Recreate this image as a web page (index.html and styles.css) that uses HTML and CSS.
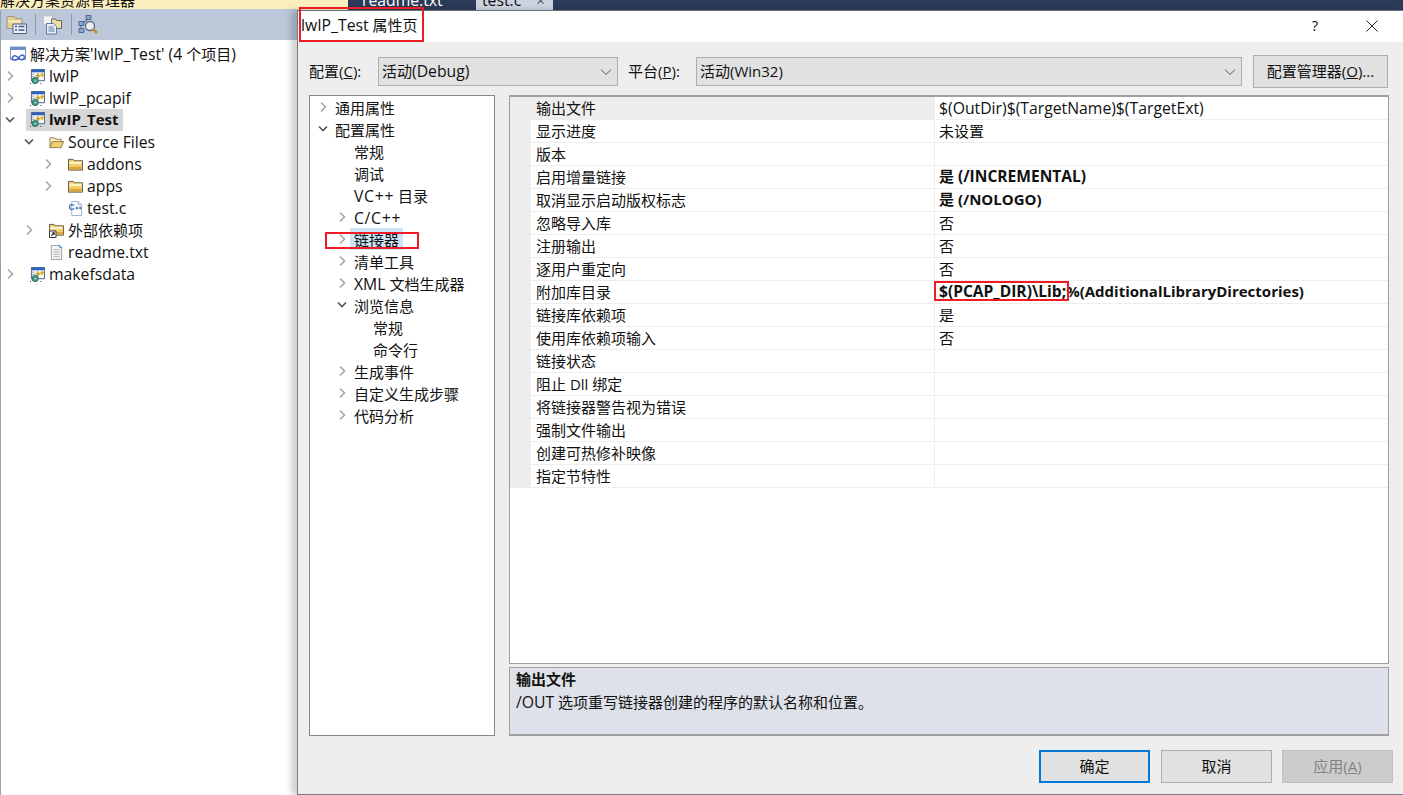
FILE: index.html
```html
<!DOCTYPE html>
<html lang="zh-CN">
<head>
<meta charset="utf-8">
<title>lwIP_Test 属性页</title>
<link rel="stylesheet" href="styles.css">
</head>
<body>
<svg class="defs" width="0" height="0" aria-hidden="true">
  <defs>
    <symbol id="chev-r" viewBox="0 0 10 12"><path d="M3 1.500 7.500 6 3 10.500" fill="none" stroke="#a6a6a6" stroke-width="1.600"/></symbol>
    <symbol id="chev-d" viewBox="0 0 10 12"><path d="M1 3.500 5 7.500 9 3.500" fill="none" stroke="#555" stroke-width="1.600"/></symbol>
    <symbol id="folder" viewBox="0 0 16 14"><path d="M.5 1.500h5l1 1.500h9v10H.5z" fill="#f3cf6b" stroke="#5f5a48"/><path d="M1.500 4h13v2.500h-13z" fill="#fdf2c4"/><path d="M1.500 9.500h13V12h-13z" fill="#dca43a"/></symbol>
    <symbol id="folder-link" viewBox="0 0 16 16"><path d="M.5 1.500h5l1 1.500h9v10H.5z" fill="#f3cf6b" stroke="#5f5a48"/><path d="M1.500 4h13v2.500h-13z" fill="#fdf2c4"/><path d="M1.500 9.500h13V12h-13z" fill="#dca43a"/><path d="M0 8h8v8H0z" fill="#fff"/><path d="M.5 8.500h7v7h-7z" fill="#fff" stroke="#222"/><path d="M2.500 13.500 5.500 10.500M3.500 10.500h2v2" fill="none" stroke="#111" stroke-width="1.100"/></symbol>
    <symbol id="folder-open" viewBox="0 0 16 14"><path d="M1 12.500V2h5l1 1.500h6V6" fill="#fbf0c8" stroke="#8c7a4a"/><path d="M1 12.500 3.500 6H15.500L13 12.500z" fill="#f3cf6b" stroke="#8c7a4a"/></symbol>
    <symbol id="project" viewBox="0 0 16 16"><path d="M1.500.5h14v12h-14z" fill="#f4f6fb" stroke="#4f5f80"/><path d="M1.500.5h14v3h-14z" fill="#2f62bd"/><path d="M8.500 4.500v5.500M6 7.200h5" stroke="#c9a21a" stroke-width="1.700"/><path d="M13 4v4.500M11 6.200h4" stroke="#d9b21f" stroke-width="1.500"/><path d="M2.500 5.500h2M2.500 8h2" stroke="#8094b8"/><circle cx="5.500" cy="12.300" r="3.400" fill="#3e9a58" stroke="#2a5f8f" stroke-width=".8"/><path d="M4 11.500h3v2H5z" fill="#7fc4e8"/><path d="M0 15.500h1M11 15.500h1" stroke="#222"/></symbol>
    <symbol id="solution" viewBox="0 0 16 16"><path d="M.5 1h15v12.500H.5z" fill="#fff" stroke="#7f93b8"/><path d="M.5 1h15v3H.5z" fill="#6d8fc9"/><path d="M2 12.500c1-3.500 3.500-3.500 5.500-1.500s3.500 3.500 5.500 2.500 2-4-.5-4.500-3.500 3.500-5.500 4.500-5 .5-5-1z" fill="none" stroke="#3f63c6" stroke-width="1.500"/></symbol>
    <symbol id="cpp" viewBox="0 0 15 16"><path d="M3.500.5h7l3.500 3.500v11.500H3.500z" fill="#fff" stroke="#9fb0c8"/><path d="M10.500.5V4h3.500" fill="#dfe8f5" stroke="#9fb0c8"/><text x="0" y="10" class="cpp-mark">C</text><path d="M7.500 7.500h3M9 6v3M11 7.500h3M12.500 6v3" stroke="#2a63b4"/></symbol>
    <symbol id="textfile" viewBox="0 0 14 16"><path d="M1.500.5h8l3 3v12h-11z" fill="#f7f7f7" stroke="#9a9a9a"/><path d="M3.500 5h7M3.500 7.500h7M3.500 10h7M3.500 12.500h7" stroke="#a9a9a9"/><path d="M9.500.5 12.500 3.500" stroke="#3f7fd0" stroke-width="1.600"/></symbol>
    <symbol id="t-props" viewBox="0 0 21 20"><path d="M1 2h7l1 2h7v10H1z" fill="#e7cf8e" stroke="#9b9a8a"/><path d="M2 6h13v2H2z" fill="#f6ecc8"/><path d="M7 9.500h13.500v9.500H7z" fill="#e8eef6" stroke="#51647f"/><path d="M9 12h2M9 15.500h2M12.500 12h6M12.500 15.500h6" stroke="#3d5a85" stroke-width="1.500"/></symbol>
    <symbol id="t-files" viewBox="0 0 20 21"><path d="M1 2h9v9H1z" fill="#f2f2f2" stroke="#bbb" stroke-dasharray="2 1"/><path d="M9 5h4l1 1.500h5v8H9z" fill="#efdca3" stroke="#6f6a58"/><path d="M4 9.500h7l3 3V20H4z" fill="#eaf0f8" stroke="#5a7aa8"/><path d="M6 13h5M6 15h6M6 17h6" stroke="#5a7aa8"/></symbol>
    <symbol id="t-class" viewBox="0 0 21 20"><path d="M8 1h5v4H8zM1 7h5v4H1z" fill="#8aa6cf" stroke="#4a6a9a"/><path d="M10 5 5 8M3 11v4" stroke="#4a5f80" fill="none"/><path d="M1 14h5v4H1z" fill="#8aa6cf" stroke="#4a6a9a"/><circle cx="12" cy="11.500" r="4.500" fill="#e9eef5" stroke="#5a6a80" stroke-width="1.300"/><path d="M15.500 15 19 18.500" stroke="#d08a2a" stroke-width="2.600"/></symbol>
  </defs>
</svg>

<div class="desktop">
  <header class="tabstrip">
    <div class="pane-title"><span>解决方案资源管理器</span></div>
    <div class="tab-dark"><span class="lat">readme.txt</span></div>
    <div class="tab-active"><span class="lat">test.c</span><b>×</b></div>
  </header>

  <aside class="explorer">
    <div class="toolbar">
      <svg class="tool"><use href="#t-props"/></svg>
      <i class="tool-sep"></i>
      <svg class="tool"><use href="#t-files"/></svg>
      <i class="tool-sep"></i>
      <svg class="tool"><use href="#t-class"/></svg>
    </div>
    <ul class="solution-tree">
      <li class="sol-row"><svg class="ico-sol"><use href="#solution"/></svg><span class="nudge">解决方案<span class="lat">'lwIP_Test' (4</span> 个项目<span class="lat">)</span></span></li>
      <li class="sol-row"><svg class="chev"><use href="#chev-r"/></svg><span class="node"><svg class="ico"><use href="#project"/></svg><span class="lat">lwIP</span></span></li>
      <li class="sol-row"><svg class="chev"><use href="#chev-r"/></svg><span class="node"><svg class="ico"><use href="#project"/></svg><span class="lat">lwIP_pcapif</span></span></li>
      <li class="sol-row"><svg class="chev"><use href="#chev-d"/></svg><span class="node node-current"><svg class="ico"><use href="#project"/></svg>lwIP_Test</span></li>
      <li class="sol-row in1"><svg class="chev"><use href="#chev-d"/></svg><span class="node"><svg class="ico"><use href="#folder-open"/></svg><span class="lat">Source Files</span></span></li>
      <li class="sol-row in2"><svg class="chev"><use href="#chev-r"/></svg><span class="node"><svg class="ico"><use href="#folder"/></svg><span class="lat">addons</span></span></li>
      <li class="sol-row in2"><svg class="chev"><use href="#chev-r"/></svg><span class="node"><svg class="ico"><use href="#folder"/></svg><span class="lat">apps</span></span></li>
      <li class="sol-row in2"><span class="chev"></span><span class="node"><svg class="ico"><use href="#cpp"/></svg><span class="lat">test.c</span></span></li>
      <li class="sol-row in1"><svg class="chev"><use href="#chev-r"/></svg><span class="node"><svg class="ico"><use href="#folder-link"/></svg><span class="nudge">外部依赖项</span></span></li>
      <li class="sol-row in1"><span class="chev"></span><span class="node"><svg class="ico"><use href="#textfile"/></svg><span class="lat">readme.txt</span></span></li>
      <li class="sol-row"><svg class="chev"><use href="#chev-r"/></svg><span class="node"><svg class="ico"><use href="#project"/></svg><span class="lat">makefsdata</span></span></li>
    </ul>
  </aside>

  <section class="dialog">
    <div class="dialog-title">
      <span class="dialog-name"><span class="lat">lwIP_Test</span> 属性页</span>
      <span class="help">?</span>
      <svg class="close" viewBox="0 0 12 12"><path d="M.5.5 11.500 11.500M11.500.5.5 11.500" stroke="#222" fill="none"/></svg>
    </div>
    <div class="dialog-body">
      <div class="config-row">
        <label class="cfg-label cfg-first">配置(<u>C</u>):</label>
        <div class="select select-config"><span class="nudge">活动<span class="lat">(Debug)</span></span><svg class="select-arrow" viewBox="0 0 12 8"><path d="M1 1.500 6 6.500 11 1.500" fill="none" stroke="#555"/></svg></div>
        <label class="cfg-label cfg-second">平台(<u>P</u>):</label>
        <div class="select select-platform"><span class="nudge">活动(Win32)</span><svg class="select-arrow" viewBox="0 0 12 8"><path d="M1 1.500 6 6.500 11 1.500" fill="none" stroke="#555"/></svg></div>
        <button class="btn btn-manager">配置管理器(<u>O</u>)...</button>
      </div>

      <div class="main-row">
        <ul class="prop-tree">
          <li class="pt-row"><svg class="chev"><use href="#chev-r"/></svg><span>通用属性</span></li>
          <li class="pt-row"><svg class="chev"><use href="#chev-d"/></svg><span>配置属性</span></li>
          <li class="pt-row pt1"><span class="chev"></span><span>常规</span></li>
          <li class="pt-row pt1"><span class="chev"></span><span>调试</span></li>
          <li class="pt-row pt1"><span class="chev"></span><span><span class="lat plus">VC++</span> 目录</span></li>
          <li class="pt-row pt1"><svg class="chev"><use href="#chev-r"/></svg><span class="lat plus lat-row">C/C++</span></li>
          <li class="pt-row pt1"><svg class="chev"><use href="#chev-r"/></svg><span class="pt-selected">链接器</span></li>
          <li class="pt-row pt1"><svg class="chev"><use href="#chev-r"/></svg><span>清单工具</span></li>
          <li class="pt-row pt1"><svg class="chev"><use href="#chev-r"/></svg><span><span class="lat">XML</span> 文档生成器</span></li>
          <li class="pt-row pt1"><svg class="chev"><use href="#chev-d"/></svg><span>浏览信息</span></li>
          <li class="pt-row pt2"><span class="chev"></span><span>常规</span></li>
          <li class="pt-row pt2"><span class="chev"></span><span>命令行</span></li>
          <li class="pt-row pt1"><svg class="chev"><use href="#chev-r"/></svg><span>生成事件</span></li>
          <li class="pt-row pt1"><svg class="chev"><use href="#chev-r"/></svg><span>自定义生成步骤</span></li>
          <li class="pt-row pt1"><svg class="chev"><use href="#chev-r"/></svg><span>代码分析</span></li>
        </ul>

        <div class="prop-pane">
          <div class="grid-box">
            <div class="grow grow-sel"><div class="gname">输出文件</div><div class="gval lat">$(OutDir)$(TargetName)$(TargetExt)</div></div>
            <div class="grow"><div class="gname">显示进度</div><div class="gval">未设置</div></div>
            <div class="grow"><div class="gname">版本</div><div class="gval"></div></div>
            <div class="grow"><div class="gname">启用增量链接</div><div class="gval gbold">是 <span class="latb">(/INCREMENTAL)</span></div></div>
            <div class="grow"><div class="gname">取消显示启动版权标志</div><div class="gval gbold">是 (/NOLOGO)</div></div>
            <div class="grow"><div class="gname">忽略导入库</div><div class="gval">否</div></div>
            <div class="grow"><div class="gname">注册输出</div><div class="gval">否</div></div>
            <div class="grow"><div class="gname">逐用户重定向</div><div class="gval">否</div></div>
            <div class="grow"><div class="gname">附加库目录</div><div class="gval gbold"><span class="latb">$(PCAP_DIR)\Lib;</span>%(AdditionalLibraryDirectories)</div></div>
            <div class="grow"><div class="gname">链接库依赖项</div><div class="gval">是</div></div>
            <div class="grow"><div class="gname">使用库依赖项输入</div><div class="gval">否</div></div>
            <div class="grow"><div class="gname">链接状态</div><div class="gval"></div></div>
            <div class="grow"><div class="gname">阻止 Dll 绑定</div><div class="gval"></div></div>
            <div class="grow"><div class="gname">将链接器警告视为错误</div><div class="gval"></div></div>
            <div class="grow"><div class="gname">强制文件输出</div><div class="gval"></div></div>
            <div class="grow"><div class="gname">创建可热修补映像</div><div class="gval"></div></div>
            <div class="grow"><div class="gname">指定节特性</div><div class="gval"></div></div>
          </div>
          <div class="desc-box">
            <div class="desc-title">输出文件</div>
            <div class="desc-text"><span class="lat">/OUT</span> 选项重写链接器创建的程序的默认名称和位置。</div>
          </div>
        </div>
      </div>

      <div class="footer">
        <button class="btn btn-foot btn-primary">确定</button>
        <button class="btn btn-foot">取消</button>
        <button class="btn btn-foot btn-disabled">应用(<u>A</u>)</button>
      </div>
    </div>
  </section>

  <i class="mark mark-title"></i>
  <i class="mark mark-linker"></i>
  <i class="mark mark-lib"></i>
</div>
</body>
</html>
```

FILE: styles.css
```css
* { box-sizing: border-box; }
html, body { margin: 0; padding: 0; }
body {
  width: 1403px;
  height: 795px;
  overflow: hidden;
  font-family: "Open Sans", "Noto Sans CJK SC", sans-serif;
  font-size: 15px;
  color: #111;
}
.defs { position: absolute; }
.cpp-mark { font: bold 9px "Liberation Sans", sans-serif; fill: #2a63b4; }
ul { list-style: none; margin: 0; padding: 0; }
u { text-decoration: underline; text-underline-offset: 1px; }
.lat { font-size: 15.75px; line-height: 20px; }
.latb { font-size: 15.55px; line-height: 20px; }
.plus { letter-spacing: .7px; }
.nudge { padding-bottom: 2px; }

.desktop {
  position: relative;
  width: 1403px;
  height: 795px;
  background: #2b3a58;
  overflow: hidden;
}

/* top strip */
.tabstrip { display: flex; height: 10px; overflow: hidden; }
.pane-title {
  width: 348px;
  background: #fcefbd;
  display: flex;
  align-items: flex-end;
  line-height: 20px;
}
.pane-title span { display: block; height: 20px; flex: none; }
.tab-dark {
  width: 128px;
  padding-left: 14px;
  color: #fff;
  display: flex;
  align-items: flex-end;
  line-height: 20px;
}
.tab-dark span { display: block; height: 20px; flex: none; }
.tab-active {
  width: 77px;
  padding-left: 6px;
  background: #ccd3e0;
  display: flex;
  align-items: flex-end;
  gap: 15px;
  line-height: 20px;
}
.tab-active span, .tab-active b { display: block; height: 20px; flex: none; }
.tab-active b { font-weight: 400; color: #555; }

/* solution explorer */
.explorer {
  width: 297px;
  height: 786px;
  margin-top: -1px;
  background: #fff;
  border-left: 1px solid #9aa0a8;
  display: flex;
  flex-direction: column;
}
.toolbar {
  height: 31px;
  background: #bcc7d9;
  display: flex;
  align-items: center;
  padding-left: 5px;
  flex: none;
}
.tool { width: 21px; height: 21px; flex: none; }
.tool-sep { width: 1px; height: 21px; background: #8d97a8; margin: 0 6px 0 8px; flex: none; }
.solution-tree { padding-top: 3px; margin-left: -1px; }
.sol-row { display: flex; align-items: center; height: 22px; white-space: nowrap; }
.in1 { padding-left: 19px; }
.in2 { padding-left: 38px; }
.chev { width: 20px; height: 12px; flex: none; display: block; }
.ico-sol { width: 16px; height: 16px; margin: 0 4px 0 10px; flex: none; }
.node { display: flex; align-items: center; height: 22px; margin-left: 6px; padding: 0 4px; }
.ico { width: 15px; height: 15px; margin-right: 4px; flex: none; }
.node-current { background: #d6d6d6; font-weight: 700; padding-bottom: 2px; }

/* dialog window */
.dialog {
  position: absolute;
  left: 297px;
  top: 10px;
  width: 1106px;
  height: 785px;
  background: #eee;
  border-top: 1px solid #6b6f78;
  border-left: 1px solid #7a7a7a;
  border-bottom: 1px solid #7a7a7a;
  box-shadow: -6px 0 6px rgba(0, 0, 0, .18);
  display: flex;
  flex-direction: column;
}
.dialog-title {
  height: 31px;
  background: #fff;
  display: flex;
  align-items: center;
  padding: 0 0 2px 3px;
  flex: none;
}
.dialog-name { flex: 1; font-size: 15px; padding-bottom: 2px; }
.help { width: 12px; margin-right: 45px; text-align: center; font-size: 15px; padding-bottom: 2px; }
.close { width: 12px; height: 12px; margin-right: 25px; }

.dialog-body {
  flex: 1;
  display: flex;
  flex-direction: column;
  padding: 13px 10px 0 11px;
}
.config-row { display: flex; align-items: center; height: 33px; margin-right: 4px; flex: none; }
.cfg-label { white-space: nowrap; padding-bottom: 2px; }
.cfg-first { width: 69px; }
.cfg-second { width: 68px; }
.select {
  height: 29px;
  background: #e1e1e1;
  border: 1px solid #adadad;
  display: flex;
  align-items: center;
  justify-content: space-between;
  padding: 0 5px 0 3px;
}
.select-config { width: 240px; margin-right: 10px; }
.select-platform { width: 546px; margin-right: 11px; }
.select-arrow { width: 12px; height: 8px; }

.btn {
  font: inherit;
  color: #111;
  background: #e1e1e1;
  border: 1px solid #adadad;
  padding: 0 0 2px;
}
.btn-manager { width: 135px; height: 33px; }

.main-row { display: flex; margin-top: 7px; margin-right: 4px; height: 641px; flex: none; }
.prop-tree {
  width: 186px;
  background: #fff;
  border: 1px solid #82868f;
  padding: 0 0 0 3px;
  flex: none;
}
.pt-row { display: flex; align-items: center; height: 22px; white-space: nowrap; }
.pt1 { padding-left: 19px; }
.pt2 { padding-left: 38px; }
.pt-row > span:last-child { margin-left: 2px; }
.pt-row > .lat-row:last-child { padding-top: 2px; }
.pt-row > .pt-selected:last-child {
  background: #cce4f7;
  height: 22px;
  line-height: 24px;
  margin-left: -2px;
  padding: 0 4px;
}

.prop-pane { width: 880px; margin-left: 14px; display: flex; flex-direction: column; flex: none; }
.grid-box {
  height: 569px;
  background: #fff;
  border: 1px solid #a0a0a0;
  border-top-width: 2px;
  flex: none;
}
.grow { display: flex; height: 23px; border-bottom: 1px solid #eee; white-space: nowrap; }
.gname {
  width: 425px;
  flex: none;
  border-left: 21px solid #eee;
  padding-left: 5px;
  border-right: 1px solid #eee;
  line-height: 22px;
}
.grow-sel .gname { background: #eee; }
.gval { flex: 1; padding-left: 4px; line-height: 22px; }
.gbold { font-weight: 700; line-height: 20px; }
.desc-box {
  height: 69px;
  margin-top: 3px;
  background: #dee1e9;
  border: 1px solid #a0a0a0;
  border-bottom-width: 2px;
  padding: 0 6px;
  line-height: 23px;
  flex: none;
}
.desc-title { font-weight: 700; }

.footer { display: flex; justify-content: flex-end; gap: 10px; margin-top: 14px; }
.btn-foot { width: 111px; height: 33px; }
.btn-primary { border: 2px solid #0078d7; margin-right: 1px; }
.btn-disabled { background: #ccc; border-color: #bfbfbf; color: #838383; }

/* red annotation rectangles drawn over the screenshot */
.mark { position: absolute; border: 2px solid #ee1c25; display: block; }
.mark-title { left: 299px; top: 7px; width: 125px; height: 35px; }
.mark-linker { left: 325px; top: 232px; width: 94px; height: 17px; }
.mark-lib { left: 934px; top: 281px; width: 135px; height: 20px; }
```
